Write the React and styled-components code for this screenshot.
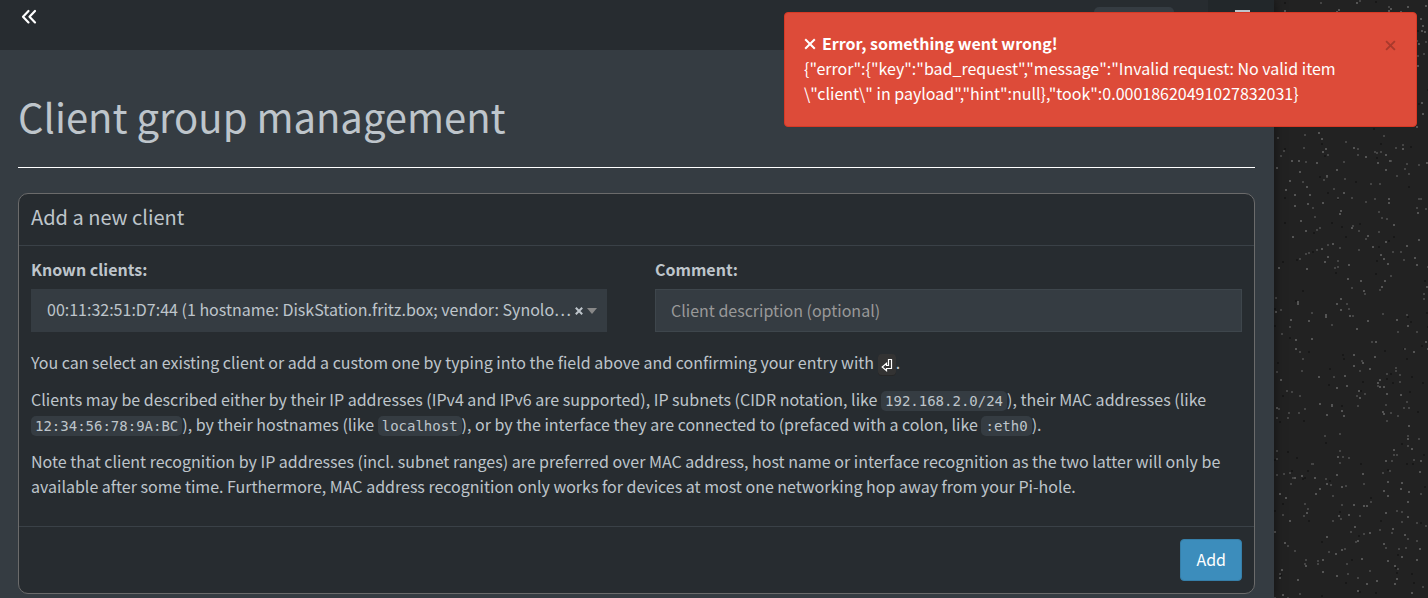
import React from 'react';
import styled, { createGlobalStyle } from 'styled-components';

const GlobalStyle = createGlobalStyle`
  * {
    box-sizing: border-box;
  }

  body {
    margin: 0;
    background: #222;
    color: #bec5cb;
    font-family: 'Noto Sans CJK KR', 'Open Sans', sans-serif;
    font-size: 16px;
    line-height: 25px;
  }

  button, input, select {
    font: inherit;
  }
`;

const Page = styled.div`
  display: flex;
  min-height: 100vh;
`;

const Wrapper = styled.div`
  flex: 1;
  min-width: 0;
  background: #353c42;
  box-shadow: 0 0 10px rgba(0, 0, 0, 0.5);
  z-index: 1;
`;

const Backdrop = styled.aside`
  flex: 0 0 154px;
  overflow: hidden;
  max-height: 100vh;
`;

const Stars = styled.svg`
  display: block;
`;

const Navbar = styled.header`
  display: flex;
  height: 50px;
  background: #272c30;
`;

const NavButton = styled.button`
  display: flex;
  align-items: flex-start;
  padding: 9px 21px;
  border: 0;
  background: ${({ $dark }) => ($dark ? '#22272a' : 'transparent')};
  color: ${({ $dark }) => ($dark ? '#bec5cb' : '#fff')};
`;

const NavHost = styled.div`
  width: 80px;
  height: 26px;
  margin: 7px 34px 0 auto;
  border-radius: 5px;
  background: #353c42;
`;

const Content = styled.main`
  padding: 36px 19px 3px 18px;
`;

const Title = styled.h1`
  margin: 0;
  padding-bottom: 20px;
  border-bottom: 1px solid #fff;
  font-size: 40px;
  font-weight: 400;
  line-height: 61px;
`;

const Box = styled.section`
  margin-top: 25px;
  border: 1px solid #6b6b6b;
  border-radius: 10px;
  background: #272c30;
`;

const BoxHeader = styled.div`
  padding: 10px 12px 16px;
  border-bottom: 1px solid #3a4147;
`;

const BoxTitle = styled.h3`
  margin: 0;
  font-size: 20px;
  font-weight: 400;
  line-height: 25px;
`;

const BoxBody = styled.div`
  padding: 11px 12px 15px;
`;

const BoxFooter = styled.div`
  display: flex;
  justify-content: flex-end;
  padding: 12px;
  border-top: 1px solid #3a4147;
`;

const Fields = styled.div`
  display: grid;
  grid-template-columns: 576fr 587fr;
  column-gap: 48px;
  margin-bottom: 18px;
`;

const Field = styled.div`
  display: flex;
  flex-direction: column;
  min-width: 0;
`;

const Label = styled.label`
  margin-bottom: 7px;
  font-weight: 700;
`;

const SelectBox = styled.div`
  display: flex;
  align-items: center;
  height: 43px;
  padding: 0 10px 0 16px;
  background: #353c42;
`;

const Select = styled.select`
  flex: 1;
  min-width: 0;
  padding: 0 0 2px;
  border: 0;
  appearance: none;
  background: transparent;
  color: inherit;
  font-feature-settings: 'pwid';
  text-overflow: ellipsis;
`;

const ClearButton = styled.button`
  display: flex;
  padding: 8px 4px 8px 0;
  border: 0;
  background: transparent;
  color: inherit;
`;

const Input = styled.input`
  height: 43px;
  padding: 0 15px 2px;
  border: 1px solid #3e464c;
  border-radius: 0;
  background: #353c42;
  color: inherit;

  &::placeholder {
    color: #999;
    opacity: 1;
  }
`;

const Text = styled.p`
  margin: 0 0 12px;
`;

const Code = styled.code`
  padding: 2px 4px;
  border-radius: 5px;
  background: #353c42;
  font-family: 'DejaVu Sans Mono', monospace;
  font-size: 14px;
  line-height: 19px;
`;

const Kbd = styled.kbd`
  display: inline-flex;
  align-items: center;
  justify-content: center;
  width: 18px;
  height: 22px;
  margin: -2px 0;
  border-radius: 4px;
  background: #333;
  box-shadow: inset 0 -1px 0 rgba(0, 0, 0, 0.25);
  color: #fff;
  vertical-align: middle;
`;

const AddButton = styled.button`
  height: 42px;
  padding: 0 15px 2px;
  border: 1px solid #367fa9;
  border-radius: 4px;
  background: #3c8dbc;
  color: #fff;
`;

const Toast = styled.div`
  position: fixed;
  top: 12px;
  right: 11px;
  z-index: 2;
  display: flex;
  align-items: flex-start;
  width: 633px;
  padding: 18px 20px 20px 19px;
  border: 1px solid #d73925;
  border-radius: 4px;
  background: #dd4b39;
  color: #fff;
`;

const ToastBody = styled.div`
  flex: 1;
  min-width: 0;
  padding-right: 44px;
`;

const ToastTitle = styled.div`
  display: flex;
  align-items: center;
  gap: 6px;
`;

const ToastMessage = styled.div`
  overflow-wrap: anywhere;
`;

const CloseButton = styled.button`
  display: flex;
  padding: 9px 0;
  border: 0;
  background: transparent;
  color: #a9392c;
`;

const random = (seed) => {
  let value = seed;
  return () => {
    value = (value * 16807) % 2147483647;
    return value / 2147483647;
  };
};

const makeDots = (count, seed) => {
  const next = random(seed);
  return Array.from({ length: count }, () => ({
    x: Math.floor(next() * 154),
    y: Math.floor(next() * 598),
  }));
};

const starLayers = [
  { fill: '#181818', dots: makeDots(130, 7712345) },
  { fill: '#444', dots: makeDots(240, 421198765) },
  { fill: '#545454', dots: makeDots(240, 91837465) },
];

const Cross = ({ size, width }) => (
  <svg width={size} height={size} viewBox="0 0 12 12" fill="none" stroke="currentColor" strokeWidth={width} aria-hidden="true">
    <path d="M1.2 1.2 10.8 10.8M10.8 1.2 1.2 10.8" />
  </svg>
);

const App = () => (
  <>
    <GlobalStyle />
    <Page>
      <Wrapper>
        <Navbar>
          <NavButton type="button" aria-label="Toggle navigation">
            <svg width="16" height="16" viewBox="0 0 16 16" fill="none" stroke="currentColor" strokeWidth="2.2" strokeLinecap="round" strokeLinejoin="round">
              <path d="M7.500 2 2 7.700l5.500 5.700M14 2 8.500 7.700l5.500 5.700" />
            </svg>
          </NavButton>
          <NavHost />
          <NavButton type="button" $dark aria-label="Menu">
            <svg width="24" height="16" viewBox="0 0 24 16" fill="currentColor">
              <path d="M6 1h15v2H6zM6 6h15v2H6zM6 11h15v2H6z" />
            </svg>
          </NavButton>
        </Navbar>
        <Content>
          <Title>Client group management</Title>
          <Box>
            <BoxHeader>
              <BoxTitle>Add a new client</BoxTitle>
            </BoxHeader>
            <BoxBody>
              <Fields>
                <Field>
                  <Label htmlFor="client">Known clients:</Label>
                  <SelectBox>
                    <Select id="client">
                      <option>00:11:32:51:D7:44 (1 hostname: DiskStation.fritz.box; vendor: Synolo…</option>
                    </Select>
                    <ClearButton type="button" aria-label="Remove client">
                      <Cross size={8} width={3} />
                    </ClearButton>
                    <svg width="10" height="6" viewBox="0 0 10 6" fill="#888" aria-hidden="true">
                      <path d="M0 0h10L5 6z" />
                    </svg>
                  </SelectBox>
                </Field>
                <Field>
                  <Label htmlFor="comment">Comment:</Label>
                  <Input id="comment" type="text" placeholder="Client description (optional)" />
                </Field>
              </Fields>
              <Text>
                You can select an existing client or add a custom one by typing into the field above and confirming your entry with{' '}
                <Kbd aria-label="Enter">
                  <svg width="12" height="14" viewBox="0 0 12 14" fill="none" stroke="currentColor" strokeWidth="1.2" aria-hidden="true">
                    <path d="M7.500 1.500h3v9h-5v2.200L1.200 9l4.300-3.700v2.200h2z" />
                  </svg>
                </Kbd>.
              </Text>
              <Text>
                Clients may be described either by their IP addresses (IPv4 and IPv6 are supported), IP subnets (CIDR notation, like{' '}
                <Code>192.168.2.0/24</Code>), their MAC addresses (like <Code>12:34:56:78:9A:BC</Code>), by their hostnames (like{' '}
                <Code>localhost</Code>), or by the interface they are connected to (prefaced with a colon, like <Code>:eth0</Code>).
              </Text>
              <Text>
                Note that client recognition by IP addresses (incl. subnet ranges) are preferred over MAC address, host name or
                interface recognition as the two latter will only be available after some time. Furthermore, MAC address
                recognition only works for devices at most one networking hop away from your Pi-hole.
              </Text>
            </BoxBody>
            <BoxFooter>
              <AddButton type="button">Add</AddButton>
            </BoxFooter>
          </Box>
        </Content>
      </Wrapper>
      <Backdrop>
        <Stars width="154" height="598" viewBox="0 0 154 598" aria-hidden="true">
          {starLayers.map(({ fill, dots }) => (
            <g key={fill} fill={fill}>
              {dots.map(({ x, y }, index) => (
                <rect key={index} x={x} y={y} width="2" height="2" />
              ))}
            </g>
          ))}
        </Stars>
      </Backdrop>
    </Page>
    <Toast role="alert">
      <ToastBody>
        <ToastTitle>
          <Cross size={12} width={2} />
          <strong>Error, something went wrong!</strong>
        </ToastTitle>
        <ToastMessage>
          {'{"error":{"key":"bad_request","message":"Invalid request: No valid item \\"client\\" in payload","hint":null},"took":0.00018620491027832031}'}
        </ToastMessage>
      </ToastBody>
      <CloseButton type="button" aria-label="Close">
        <Cross size={11} width={2} />
      </CloseButton>
    </Toast>
  </>
);

export default App;
